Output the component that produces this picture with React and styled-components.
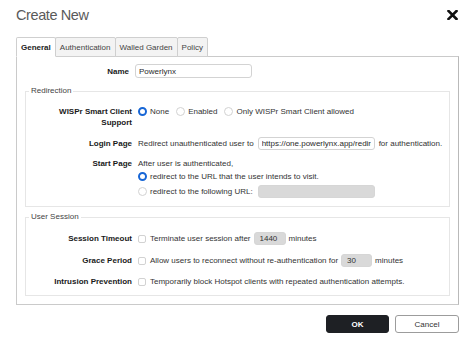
import styled, { createGlobalStyle } from 'styled-components';

const GlobalStyle = createGlobalStyle`
    html, body {
        margin: 0;
        padding: 0;
        background: #ffffff;
    }
    body {
        font-family: "Liberation Sans", Arial, sans-serif;
        font-size: 8px;
        color: #333333;
    }
    * {
        box-sizing: border-box;
    }
`;

export default function App() {
    return (
        <>
            <GlobalStyle />
            <Dialog>
                <Header>
                    <Title>Create New</Title>
                    <Close aria-label="Close">
                        <svg width="11" height="10" viewBox="0 0 11 10">
                            <path d="M1.5 1 L9.5 9 M9.5 1 L1.5 9" stroke="#111" strokeWidth="2.6" strokeLinecap="square" />
                        </svg>
                    </Close>
                </Header>

                <Tabs>
                    <Tab active>General</Tab>
                    <Tab>Authentication</Tab>
                    <Tab>Walled Garden</Tab>
                    <Tab>Policy</Tab>
                </Tabs>

                <Panel>
                    <FormRow>
                        <Label>Name</Label>
                        <TextInput width={117} height={14} defaultValue="Powerlynx" readOnly />
                    </FormRow>

                    <Group>
                        <Legend>Redirection</Legend>
                        <Rows>
                            <FormRow top>
                                <Label>WISPr Smart Client Support</Label>
                                <Line>
                                    <Option><Radio checked />None</Option>
                                    <Option><Radio />Enabled</Option>
                                    <Option><Radio />Only WISPr Smart Client allowed</Option>
                                </Line>
                            </FormRow>
                            <FormRow spaced={9}>
                                <Label>Login Page</Label>
                                <Line gap={4}>
                                    Redirect unauthenticated user to
                                    <TextInput width={117} height={13} defaultValue="https://one.powerlynx.app/redirect" readOnly />
                                    <span>for authentication.</span>
                                </Line>
                            </FormRow>
                            <FormRow top spaced={7}>
                                <Label tall>Start Page</Label>
                                <div>
                                    <Line tall>After user is authenticated,</Line>
                                    <Line tall><Option><Radio checked />redirect to the URL that the user intends to visit.</Option></Line>
                                    <Line gap={5} pushed>
                                        <Option><Radio />redirect to the following URL:</Option>
                                        <GreyInput width={117} disabled />
                                    </Line>
                                </div>
                            </FormRow>
                        </Rows>
                    </Group>

                    <Group second>
                        <Legend>User Session</Legend>
                        <Rows gap={9}>
                            <FormRow>
                                <Label>Session Timeout</Label>
                                <Line gap={3}>
                                    <Option><Check />Terminate user session after</Option>
                                    <GreyInput width={32} defaultValue="1440" readOnly />
                                    <span>minutes</span>
                                </Line>
                            </FormRow>
                            <FormRow>
                                <Label>Grace Period</Label>
                                <Line gap={3}>
                                    <Option><Check />Allow users to reconnect without re-authentication for</Option>
                                    <GreyInput width={31} defaultValue="30" readOnly />
                                    <span>minutes</span>
                                </Line>
                            </FormRow>
                            <FormRow>
                                <Label>Intrusion Prevention</Label>
                                <Line>
                                    <Option><Check />Temporarily block Hotspot clients with repeated authentication attempts.</Option>
                                </Line>
                            </FormRow>
                        </Rows>
                    </Group>
                </Panel>

                <Footer>
                    <Button primary width={63}>OK</Button>
                    <Button width={64}>Cancel</Button>
                </Footer>
            </Dialog>
        </>
    );
}

const Dialog = styled.div`
    width: 474px;
    height: 346px;
    padding: 7px 15px 0 16px;
`;

const Header = styled.div`
    display: flex;
    justify-content: space-between;
    align-items: center;
    height: 16px;
`;

const Title = styled.h1`
    margin: 0;
    font-size: 14.5px;
    line-height: 16px;
    font-weight: 400;
    letter-spacing: -0.4px;
    color: #5a5a5a;
`;

const Close = styled.div`
    display: flex;
    width: 11px;
    height: 10px;
    margin-right: 1px;
    cursor: pointer;
`;

const Tabs = styled.div`
    display: flex;
    margin-top: 14px;
    margin-bottom: -1px;
`;

const Tab = styled.div`
    position: relative;
    display: flex;
    align-items: center;
    height: 20px;
    padding: 0 4px;
    margin-right: -1px;
    border: 1px solid #cfcfcf;
    border-bottom-color: ${p => p.active ? '#ffffff' : '#cfcfcf'};
    border-radius: 2px 2px 0 0;
    background: ${p => p.active ? '#ffffff' : '#f3f3f3'};
    color: ${p => p.active ? '#1c1c1c' : '#444444'};
    font-weight: ${p => p.active ? 700 : 400};
    z-index: ${p => p.active ? 2 : 1};
    cursor: pointer;
`;

const Panel = styled.div`
    border: 1px solid #cacaca;
    border-right-color: #b9b9b9;
    padding: 7px 8px 8px;
`;

const FormRow = styled.div`
    display: grid;
    grid-template-columns: 104px 1fr;
    column-gap: 6px;
    align-items: ${p => p.top ? 'start' : 'center'};
    margin-top: ${p => p.spaced || 0}px;
`;

const Label = styled.div`
    text-align: right;
    font-weight: 700;
    color: #1a1a1a;
    line-height: ${p => p.tall ? 13 : 11}px;
`;

const Rows = styled.div`
    display: flex;
    flex-direction: column;
    gap: ${p => p.gap || 0}px;
`;

const Group = styled.fieldset`
    min-width: 0;
    margin: ${p => p.second ? 5 : 8}px 0 0;
    padding: 10px 6px 8px 2px;
    border: 1px solid #e6e6e6;
`;

const Legend = styled.legend`
    margin-left: 1px;
    padding: 0 2px;
    line-height: 10px;
    color: #444444;
`;

const Line = styled.div`
    display: flex;
    align-items: center;
    gap: ${p => p.gap || 7}px;
    min-height: ${p => p.tall ? 13 : 11}px;
    line-height: ${p => p.tall ? 13 : 11}px;
    margin-top: ${p => p.pushed ? 2 : 0}px;
    white-space: nowrap;
`;

const Option = styled.label`
    display: flex;
    align-items: center;
    gap: 3px;
`;

const Radio = styled.span`
    display: inline-block;
    width: 9px;
    height: 9px;
    border-radius: 50%;
    background: #ffffff;
    border: ${p => p.checked ? '2.5px solid #1766d6' : '1px solid #d2d2d2'};
    flex-shrink: 0;
`;

const Check = styled.span`
    display: inline-block;
    width: 8px;
    height: 8px;
    margin-right: 1px;
    border: 1px solid #d2d2d2;
    border-radius: 2px;
    background: #ffffff;
    flex-shrink: 0;
`;

const TextInput = styled.input`
    width: ${p => p.width}px;
    height: ${p => p.height}px;
    padding: 0 3px;
    border: 1px solid #d3d3d3;
    border-radius: 3px;
    background: #ffffff;
    font-family: inherit;
    font-size: 8px;
    color: #2a2a2a;
    outline: none;
`;

const GreyInput = styled.input`
    width: ${p => p.width}px;
    height: 13px;
    padding: 0 5px;
    border: 1px solid #d6d6d6;
    border-radius: 3px;
    background: #d9d9d9;
    font-family: inherit;
    font-size: 8px;
    color: #333333;
    outline: none;
`;

const Footer = styled.div`
    display: flex;
    justify-content: flex-end;
    gap: 6px;
    margin-top: 10px;
`;

const Button = styled.button`
    width: ${p => p.width}px;
    height: 18px;
    padding: 0;
    border-radius: 3px;
    border: 1px solid ${p => p.primary ? '#1e2024' : '#9c9c9c'};
    background: ${p => p.primary ? '#1e2024' : '#ffffff'};
    color: ${p => p.primary ? '#ffffff' : '#333333'};
    font-family: inherit;
    font-size: 8px;
    font-weight: ${p => p.primary ? 700 : 400};
    cursor: pointer;
`;
